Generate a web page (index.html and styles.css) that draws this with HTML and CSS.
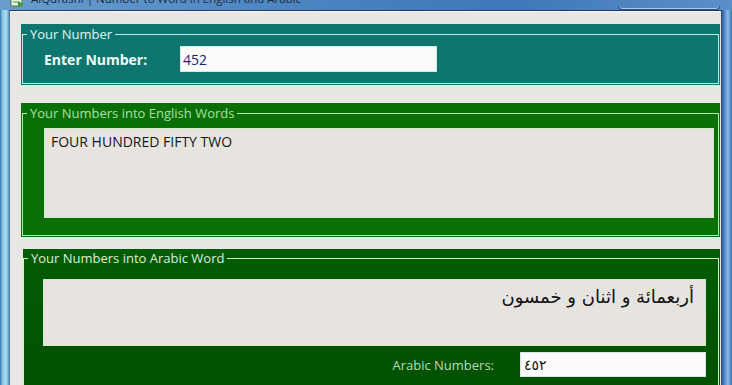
FILE: index.html
```html
<!DOCTYPE html>
<html lang="en">
<head>
    <meta charset="UTF-8">
    <title>AlQurashi | Number to Word in English and Arabic</title>
    <link rel="stylesheet" href="styles.css">
</head>
<body>
    <div class="window">
        <div class="titlebar">
            <span class="app-icon">
                <svg width="14" height="14" viewBox="0 0 14 14">
                    <rect x="1" y="1" width="11" height="12" fill="#eaf4e4" stroke="#4c7a3c"/>
                    <path d="M3 4h7M3 6.5h7M3 9h5" stroke="#3f8f2c" stroke-width="1.2"/>
                    <path d="M8 8l5 3-5 3z" fill="#2f9a2a"/>
                </svg>
            </span>
            <span class="title">AlQurashi | Number to Word in English and Arabic</span>
            <span class="caption-buttons"></span>
        </div>
        <div class="frame">
            <div class="frame-left"></div>
            <div class="client">
                <div class="panel panel-number">
                    <fieldset class="group">
                        <legend>Your Number</legend>
                        <div class="group-body number-row">
                            <label class="field-label" for="number">Enter Number:</label>
                            <input id="number" class="entry entry-number" type="text" value="452" readonly>
                        </div>
                    </fieldset>
                </div>

                <div class="panel panel-english">
                    <fieldset class="group">
                        <legend>Your Numbers into English Words</legend>
                        <div class="group-body">
                            <div class="words-box english-words">FOUR HUNDRED FIFTY TWO</div>
                        </div>
                    </fieldset>
                </div>

                <div class="panel panel-arabic">
                    <fieldset class="group">
                        <legend>Your Numbers into Arabic Word</legend>
                        <div class="group-body">
                            <div class="words-box arabic-words" dir="rtl" lang="ar">أربعمائة و اثنان و خمسون</div>
                            <div class="digits-row">
                                <label class="digits-label" for="digits">Arabic Numbers:</label>
                                <input id="digits" class="entry entry-digits" type="text" value="٤٥٢" readonly>
                            </div>
                        </div>
                    </fieldset>
                </div>
            </div>
            <div class="frame-right"></div>
        </div>
    </div>
</body>
</html>
```

FILE: styles.css
```css
/* Windows 7 style form: number to words */
body {
    margin: 0;
    width: 732px;
    height: 385px;
    overflow: hidden;
    font-family: 'Open Sans', 'DejaVu Sans', sans-serif;
    background: #4a80bd;
}
.window {
    height: 385px;
    display: flex;
    flex-direction: column;
}
.titlebar {
    height: 10px;
    flex: none;
    display: flex;
    align-items: flex-end;
    overflow: hidden;
    background: linear-gradient(to right, #6a9dcc, #4f87c2 35%, #3f77b8 70%, #5a90c8);
}
.app-icon {
    width: 14px;
    height: 14px;
    margin: 0 7px 6px 10px;
    flex: none;
}
.title {
    font-size: 11.5px;
    line-height: 20px;
    color: #1c2c40;
    white-space: nowrap;
    margin-bottom: 1px;
}
.caption-buttons {
    margin-left: auto;
    margin-right: 12px;
    width: 100px;
    height: 3px;
    border: 1px solid #2a4f80;
    border-top: none;
    border-radius: 0 0 4px 4px;
    box-shadow: inset 0 -1px 0 #a9c8ea;
    flex: none;
}
.frame {
    flex: 1;
    display: flex;
    min-height: 0;
}
.frame-left {
    width: 9px;
    background: linear-gradient(to right, #3d74ad, #8ccbe3 30%, #a6dcee 70%, #5f93c2);
}
.frame-right {
    width: 10px;
    background: linear-gradient(to right, #2d5f9e, #6a9fd6 40%, #8dbbe6 60%, #3a6fb0);
}
.client {
    flex: 1;
    background: #e9e7e3;
    border-top: 1px solid #1f3a66;
    border-left: 1px solid #55779c;
    border-right: 1px solid #2b4a74;
    padding: 13px 1px 0 11px;
    box-shadow: inset 0 1px 0 #f6f6f4;
}
.panel {
    padding: 2px 1px 1px 1px;
}
.group {
    margin: 0;
    padding: 0;
    border: 1px solid;
    min-width: 0;
}
.group legend {
    margin-left: 4px;
    padding: 0 3px;
    font-size: 13px;
    line-height: 16px;
}
.group-body {
    padding-left: 21px;
}

/* first panel */
.panel-number {
    background: #0f766f;
}
.panel-number .group {
    border-color: #b9ece5;
}
.panel-number legend {
    color: #e2f4f1;
}
.number-row {
    display: flex;
    align-items: center;
    padding-top: 4px;
    padding-bottom: 11px;
}
.field-label {
    width: 136px;
    font-size: 14px;
    font-weight: bold;
    color: #f2faf8;
}
.entry {
    box-sizing: border-box;
    border: 1px solid #d6e6e2;
    background: #fbfbfa;
    padding: 0 2px;
    outline: none;
}
.entry-number {
    width: 257px;
    height: 26px;
    font-family: 'Open Sans', sans-serif;
    font-size: 14px;
    color: #1d1d78;
}

/* second panel */
.panel-english {
    margin-top: 18px;
    background: #0a6f07;
}
.panel-english .group {
    border-color: #b4eaac;
}
.panel-english legend {
    color: #a9e0a2;
}
.panel-english .group-body {
    padding: 7px 4px 17px 21px;
}
.words-box {
    box-sizing: border-box;
    background: #e7e4e0;
    border: 1px solid #c9efc2;
    color: #151515;
}
.english-words {
    height: 90px;
    padding: 4px 6px 3px;
    font-size: 14px;
    line-height: 18px;
}

/* third panel */
.panel-arabic {
    margin-top: 12px;
    margin-left: 2px;
    padding: 1px 1px 0 0;
    height: 136px;
    background: linear-gradient(#045c04, #015101);
}
.panel-arabic .group {
    border-color: #d2eecf;
    height: 100%;
    box-sizing: border-box;
}
.panel-arabic legend {
    color: #dcefd9;
}
.panel-arabic .group-body {
    padding: 13px 12px 0 19px;
}
.arabic-words {
    height: 67px;
    padding: 5px 11px;
    font-family: 'DejaVu Sans', sans-serif;
    font-size: 18px;
    line-height: 24px;
    text-align: right;
    color: #111;
}
.digits-row {
    display: flex;
    justify-content: flex-end;
    align-items: center;
    gap: 26px;
    margin-top: 6px;
}
.digits-label {
    font-size: 13px;
    color: #b8dcb2;
}
.entry-digits {
    width: 186px;
    height: 25px;
    padding-left: 3px;
    font-family: 'DejaVu Sans', sans-serif;
    font-size: 14px;
    color: #111;
}
```
